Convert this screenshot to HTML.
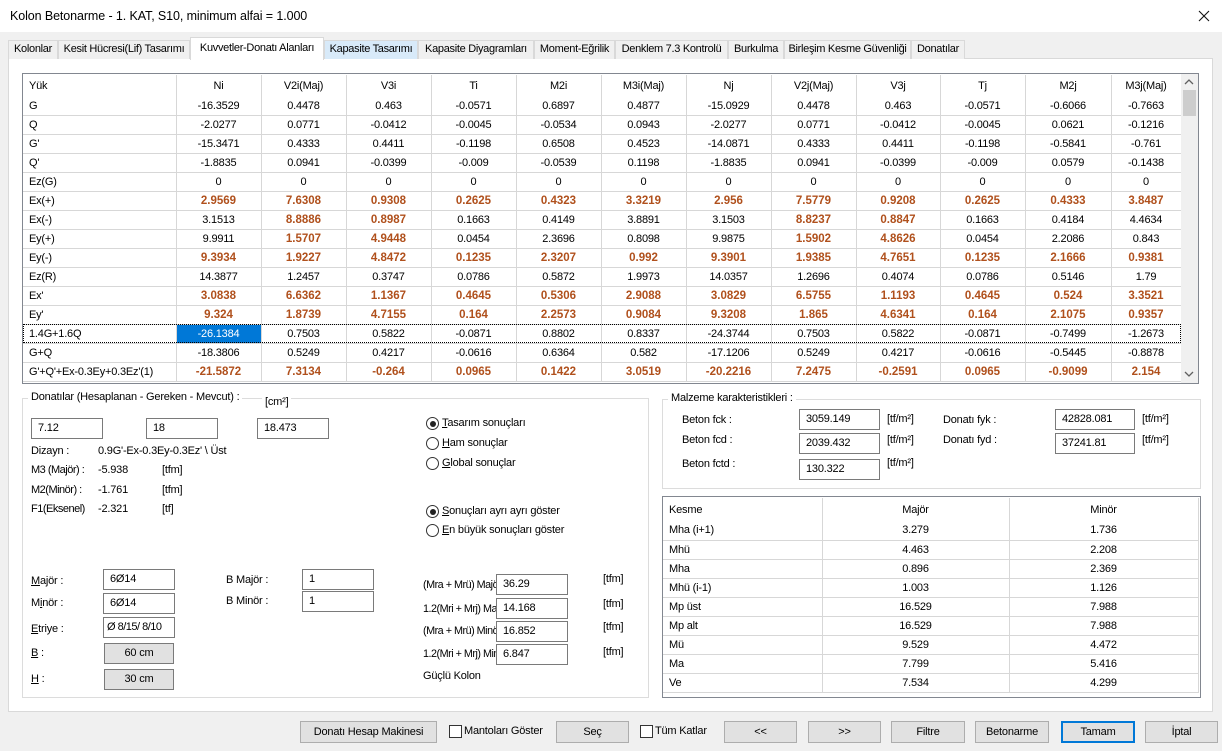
<!DOCTYPE html>
<html><head><meta charset="utf-8">
<style>
*{box-sizing:border-box;margin:0;padding:0}
body{width:1222px;height:751px;background:#f0f0f0;font-family:"Liberation Sans",Arial,sans-serif;font-size:11px;letter-spacing:-0.2px;color:#000;position:relative;overflow:hidden}
.a{position:absolute;white-space:nowrap}
.title{left:0;top:0;width:1222px;height:32px;background:#fff}
.tab{position:absolute;top:40px;height:19px;border:1px solid #d9d9d9;border-bottom:none;background:#f0f0f0;text-align:center;line-height:17px;font-size:11px;white-space:nowrap;overflow:hidden;letter-spacing:-0.3px}
.page{left:8px;top:58px;width:1205px;height:654px;background:#fff;border:1px solid #d9d9d9}
table{border-collapse:collapse;table-layout:fixed}
#g{position:absolute;left:23px;top:75px}
#g td{height:19px;border-right:1px solid #d7d7d7;border-bottom:1px solid #d7d7d7;text-align:center;padding:1px 0 0;font-size:11px;overflow:hidden;white-space:nowrap}
#g tr.h td{height:21px;border-bottom:none;padding:0}
#g td:first-child{text-align:left;padding-left:6px}
#g td.b{font-weight:bold;color:#b0501c;font-size:11.5px;letter-spacing:0}
.box{position:absolute;border:1px solid #7a7a7a;background:#fff;height:21px;line-height:19px;padding-left:6px;font-size:11px}
.gbox{position:absolute;border:1px solid #7a7a7a;background:#e1e1e1;height:21px;line-height:19px;text-align:center}
.grp{position:absolute;border:1px solid #dcdcdc}
.radio{position:absolute;width:13px;height:13px;border:1px solid #333;border-radius:50%;background:#fff}
.radio.on::after{content:"";position:absolute;left:2.5px;top:2.5px;width:6px;height:6px;border-radius:50%;background:#222}
.btn{position:absolute;top:721px;height:22px;border:1px solid #adadad;background:#e1e1e1;text-align:center;line-height:20px;font-size:11px;white-space:nowrap}
.chk{position:absolute;top:725px;width:13px;height:13px;border:1px solid #333;background:#fff}
#k{position:absolute;left:663px;top:498px}
#k td{height:19px;border-right:1px solid #d7d7d7;border-bottom:1px solid #d7d7d7;text-align:center;font-size:11px}
#k td:first-child{text-align:left;padding-left:6px}
u{text-decoration:underline}
.n{letter-spacing:-0.5px}
.m{letter-spacing:-0.5px;font-size:10.8px}
</style></head><body>
<div class="a title"></div>
<div class="a" style="left:10px;top:9px;font-size:12.5px;letter-spacing:-0.1px">Kolon Betonarme - 1. KAT, S10, minimum alfai = 1.000</div>
<svg class="a" style="left:1198px;top:10px" width="12" height="12"><path d="M1 1L11 11M11 1L1 11" stroke="#111" stroke-width="1.1"/></svg>

<div class="a page"></div>
<div class="tab" style="left:8px;width:50px">Kolonlar</div>
<div class="tab" style="left:58px;width:132px">Kesit Hücresi(Lif) Tasarımı</div>
<div class="tab" style="left:324px;width:94px;background:#d8eaf9">Kapasite Tasarımı</div>
<div class="tab" style="left:418px;width:116px">Kapasite Diyagramları</div>
<div class="tab" style="left:534px;width:81px">Moment-Eğrilik</div>
<div class="tab" style="left:615px;width:113px">Denklem 7.3 Kontrolü</div>
<div class="tab" style="left:728px;width:56px">Burkulma</div>
<div class="tab" style="left:784px;width:127px">Birleşim Kesme Güvenliği</div>
<div class="tab" style="left:911px;width:54px">Donatılar</div>
<div class="tab" style="left:190px;top:37px;height:23px;width:134px;background:#fff;line-height:20px">Kuvvetler-Donatı Alanları</div>

<div class="a" style="left:22px;top:73px;width:1177px;height:311px;border:1px solid #828790;background:#fff"></div>
<table id="g">
<colgroup><col style="width:153px"><col style="width:85px"><col style="width:85px"><col style="width:85px"><col style="width:85px"><col style="width:85px"><col style="width:85px"><col style="width:85px"><col style="width:85px"><col style="width:84px"><col style="width:85px"><col style="width:86px"><col style="width:70px"></colgroup>
<tr class="h"><td style="padding-left:6px">Yük</td><td>Ni</td><td>V2i(Maj)</td><td>V3i</td><td>Ti</td><td>M2i</td><td>M3i(Maj)</td><td>Nj</td><td>V2j(Maj)</td><td>V3j</td><td>Tj</td><td>M2j</td><td>M3j(Maj)</td></tr>
<tr><td>G</td><td>-16.3529</td><td>0.4478</td><td>0.463</td><td>-0.0571</td><td>0.6897</td><td>0.4877</td><td>-15.0929</td><td>0.4478</td><td>0.463</td><td>-0.0571</td><td>-0.6066</td><td>-0.7663</td></tr>
<tr><td>Q</td><td>-2.0277</td><td>0.0771</td><td>-0.0412</td><td>-0.0045</td><td>-0.0534</td><td>0.0943</td><td>-2.0277</td><td>0.0771</td><td>-0.0412</td><td>-0.0045</td><td>0.0621</td><td>-0.1216</td></tr>
<tr><td>G'</td><td>-15.3471</td><td>0.4333</td><td>0.4411</td><td>-0.1198</td><td>0.6508</td><td>0.4523</td><td>-14.0871</td><td>0.4333</td><td>0.4411</td><td>-0.1198</td><td>-0.5841</td><td>-0.761</td></tr>
<tr><td>Q'</td><td>-1.8835</td><td>0.0941</td><td>-0.0399</td><td>-0.009</td><td>-0.0539</td><td>0.1198</td><td>-1.8835</td><td>0.0941</td><td>-0.0399</td><td>-0.009</td><td>0.0579</td><td>-0.1438</td></tr>
<tr><td>Ez(G)</td><td>0</td><td>0</td><td>0</td><td>0</td><td>0</td><td>0</td><td>0</td><td>0</td><td>0</td><td>0</td><td>0</td><td>0</td></tr>
<tr><td>Ex(+)</td><td class="b">2.9569</td><td class="b">7.6308</td><td class="b">0.9308</td><td class="b">0.2625</td><td class="b">0.4323</td><td class="b">3.3219</td><td class="b">2.956</td><td class="b">7.5779</td><td class="b">0.9208</td><td class="b">0.2625</td><td class="b">0.4333</td><td class="b">3.8487</td></tr>
<tr><td>Ex(-)</td><td>3.1513</td><td class="b">8.8886</td><td class="b">0.8987</td><td>0.1663</td><td>0.4149</td><td>3.8891</td><td>3.1503</td><td class="b">8.8237</td><td class="b">0.8847</td><td>0.1663</td><td>0.4184</td><td>4.4634</td></tr>
<tr><td>Ey(+)</td><td>9.9911</td><td class="b">1.5707</td><td class="b">4.9448</td><td>0.0454</td><td>2.3696</td><td>0.8098</td><td>9.9875</td><td class="b">1.5902</td><td class="b">4.8626</td><td>0.0454</td><td>2.2086</td><td>0.843</td></tr>
<tr><td>Ey(-)</td><td class="b">9.3934</td><td class="b">1.9227</td><td class="b">4.8472</td><td class="b">0.1235</td><td class="b">2.3207</td><td class="b">0.992</td><td class="b">9.3901</td><td class="b">1.9385</td><td class="b">4.7651</td><td class="b">0.1235</td><td class="b">2.1666</td><td class="b">0.9381</td></tr>
<tr><td>Ez(R)</td><td>14.3877</td><td>1.2457</td><td>0.3747</td><td>0.0786</td><td>0.5872</td><td>1.9973</td><td>14.0357</td><td>1.2696</td><td>0.4074</td><td>0.0786</td><td>0.5146</td><td>1.79</td></tr>
<tr><td>Ex'</td><td class="b">3.0838</td><td class="b">6.6362</td><td class="b">1.1367</td><td class="b">0.4645</td><td class="b">0.5306</td><td class="b">2.9088</td><td class="b">3.0829</td><td class="b">6.5755</td><td class="b">1.1193</td><td class="b">0.4645</td><td class="b">0.524</td><td class="b">3.3521</td></tr>
<tr><td>Ey'</td><td class="b">9.324</td><td class="b">1.8739</td><td class="b">4.7155</td><td class="b">0.164</td><td class="b">2.2573</td><td class="b">0.9084</td><td class="b">9.3208</td><td class="b">1.865</td><td class="b">4.6341</td><td class="b">0.164</td><td class="b">2.1075</td><td class="b">0.9357</td></tr>
<tr style="outline:1px dotted #000;outline-offset:-1px"><td>1.4G+1.6Q</td><td style="background:#0078d7;color:#fff">-26.1384</td><td>0.7503</td><td>0.5822</td><td>-0.0871</td><td>0.8802</td><td>0.8337</td><td>-24.3744</td><td>0.7503</td><td>0.5822</td><td>-0.0871</td><td>-0.7499</td><td>-1.2673</td></tr>
<tr><td>G+Q</td><td>-18.3806</td><td>0.5249</td><td>0.4217</td><td>-0.0616</td><td>0.6364</td><td>0.582</td><td>-17.1206</td><td>0.5249</td><td>0.4217</td><td>-0.0616</td><td>-0.5445</td><td>-0.8878</td></tr>
<tr><td>G'+Q'+Ex-0.3Ey+0.3Ez'(1)</td><td class="b">-21.5872</td><td class="b">7.3134</td><td class="b">-0.264</td><td class="b">0.0965</td><td class="b">0.1422</td><td class="b">3.0519</td><td class="b">-20.2216</td><td class="b">7.2475</td><td class="b">-0.2591</td><td class="b">0.0965</td><td class="b">-0.9099</td><td class="b">2.154</td></tr>
</table>
<div class="a" style="left:1181px;top:74px;width:17px;height:309px;background:#f0f0f0"></div>
<div class="a" style="left:1183px;top:90px;width:13px;height:26px;background:#cdcdcd"></div>
<svg class="a" style="left:1184px;top:78px" width="10" height="8"><path d="M1 6L5 2L9 6" stroke="#606060" fill="none" stroke-width="1.3"/></svg>
<svg class="a" style="left:1184px;top:370px" width="10" height="8"><path d="M1 2L5 6L9 2" stroke="#606060" fill="none" stroke-width="1.3"/></svg>

<!-- left group -->
<div class="grp" style="left:22px;top:398px;width:627px;height:300px"></div>
<div class="a" style="left:28px;top:391px;background:#fff;padding:0 3px">Donatılar (Hesaplanan - Gereken - Mevcut) :</div>
<div class="a" style="left:262px;top:396px;background:#fff;padding:0 3px">[cm²]</div>
<div class="box" style="left:31px;top:418px;width:72px">7.12</div>
<div class="box" style="left:146px;top:418px;width:72px">18</div>
<div class="box" style="left:257px;top:418px;width:72px">18.473</div>
<div class="a" style="left:31px;top:445px">Dizayn :</div><div class="a" style="left:98px;top:445px">0.9G'-Ex-0.3Ey-0.3Ez' \ Üst</div>
<div class="a n" style="left:31px;top:464px">M3 (Majör) :</div><div class="a" style="left:98px;top:464px">-5.938</div><div class="a" style="left:162px;top:464px">[tfm]</div>
<div class="a n" style="left:31px;top:484px">M2(Minör) :</div><div class="a" style="left:98px;top:484px">-1.761</div><div class="a" style="left:162px;top:484px">[tfm]</div>
<div class="a n" style="left:31px;top:503px">F1(Eksenel)</div><div class="a" style="left:98px;top:503px">-2.321</div><div class="a" style="left:162px;top:503px">[tf]</div>

<div class="radio on" style="left:426px;top:417px"></div><div class="a" style="left:442px;top:417px"><u>T</u>asarım sonuçları</div>
<div class="radio" style="left:426px;top:437px"></div><div class="a" style="left:442px;top:437px"><u>H</u>am sonuçlar</div>
<div class="radio" style="left:426px;top:457px"></div><div class="a" style="left:442px;top:457px"><u>G</u>lobal sonuçlar</div>
<div class="radio on" style="left:426px;top:505px"></div><div class="a" style="left:442px;top:505px"><u>S</u>onuçları ayrı ayrı göster</div>
<div class="radio" style="left:426px;top:524px"></div><div class="a" style="left:442px;top:524px"><u>E</u>n büyük sonuçları göster</div>

<div class="a" style="left:31px;top:575px"><u>M</u>ajör :</div><div class="box" style="left:103px;top:569px;width:72px">6Ø14</div>
<div class="a" style="left:31px;top:597px">M<u>i</u>nör :</div><div class="box" style="left:103px;top:593px;width:72px">6Ø14</div>
<div class="a" style="left:31px;top:623px"><u>E</u>triye :</div><div class="box n" style="left:103px;top:617px;width:72px;padding-left:3px">Ø 8/15/ 8/10</div>
<div class="a" style="left:31px;top:647px"><u>B</u> :</div><div class="gbox" style="left:104px;top:643px;width:70px">60 cm</div>
<div class="a" style="left:31px;top:673px"><u>H</u> :</div><div class="gbox" style="left:104px;top:669px;width:70px">30 cm</div>
<div class="a" style="left:226px;top:574px">B Majör :</div><div class="box" style="left:302px;top:569px;width:72px">1</div>
<div class="a" style="left:226px;top:595px">B Minör :</div><div class="box" style="left:302px;top:591px;width:72px">1</div>

<div class="a m" style="left:423px;top:579px">(Mra + Mrü) Majör :</div><div class="box" style="left:496px;top:574px;width:72px">36.29</div><div class="a" style="left:603px;top:573px">[tfm]</div>
<div class="a m" style="left:423px;top:603px">1.2(Mri + Mrj) Majör</div><div class="box" style="left:496px;top:598px;width:72px">14.168</div><div class="a" style="left:603px;top:598px">[tfm]</div>
<div class="a m" style="left:423px;top:625px">(Mra + Mrü) Minör :</div><div class="box" style="left:496px;top:621px;width:72px">16.852</div><div class="a" style="left:603px;top:621px">[tfm]</div>
<div class="a m" style="left:423px;top:648px">1.2(Mri + Mrj) Minör</div><div class="box" style="left:496px;top:644px;width:72px">6.847</div><div class="a" style="left:603px;top:646px">[tfm]</div>
<div class="a" style="left:423px;top:670px">Güçlü Kolon</div>

<!-- right group -->
<div class="grp" style="left:662px;top:399px;width:539px;height:90px"></div>
<div class="a" style="left:668px;top:392px;background:#fff;padding:0 3px">Malzeme karakteristikleri :</div>
<div class="a" style="left:682px;top:414px">Beton fck :</div><div class="box" style="left:799px;top:409px;width:81px">3059.149</div><div class="a" style="left:887px;top:413px">[tf/m²]</div>
<div class="a" style="left:682px;top:434px">Beton fcd :</div><div class="box" style="left:799px;top:433px;width:81px">2039.432</div><div class="a" style="left:887px;top:434px">[tf/m²]</div>
<div class="a" style="left:682px;top:458px">Beton fctd :</div><div class="box" style="left:799px;top:459px;width:81px">130.322</div><div class="a" style="left:887px;top:457px">[tf/m²]</div>
<div class="a" style="left:943px;top:414px">Donatı fyk :</div><div class="box" style="left:1055px;top:409px;width:80px">42828.081</div><div class="a" style="left:1142px;top:413px">[tf/m²]</div>
<div class="a" style="left:943px;top:434px">Donatı fyd :</div><div class="box" style="left:1055px;top:433px;width:80px">37241.81</div><div class="a" style="left:1142px;top:434px">[tf/m²]</div>

<div class="a" style="left:662px;top:496px;width:539px;height:202px;border:1px solid #828790;background:#fff"></div>
<table id="k">
<colgroup><col style="width:159px"><col style="width:187px"><col style="width:189px"></colgroup>
<tr><td style="height:23px;border-bottom:none">Kesme</td><td style="border-bottom:none">Majör</td><td style="border-bottom:none">Minör</td></tr>
<tr><td>Mha (i+1)</td><td>3.279</td><td>1.736</td></tr>
<tr><td>Mhü</td><td>4.463</td><td>2.208</td></tr>
<tr><td>Mha</td><td>0.896</td><td>2.369</td></tr>
<tr><td>Mhü (i-1)</td><td>1.003</td><td>1.126</td></tr>
<tr><td>Mp üst</td><td>16.529</td><td>7.988</td></tr>
<tr><td>Mp alt</td><td>16.529</td><td>7.988</td></tr>
<tr><td>Mü</td><td>9.529</td><td>4.472</td></tr>
<tr><td>Ma</td><td>7.799</td><td>5.416</td></tr>
<tr><td>Ve</td><td>7.534</td><td>4.299</td></tr>
</table>

<!-- bottom -->
<div class="btn" style="left:300px;width:137px">Donatı Hesap Makinesi</div>
<div class="chk" style="left:449px"></div><div class="a" style="left:464px;top:725px">Mantoları Göster</div>
<div class="btn" style="left:556px;width:73px">Seç</div>
<div class="chk" style="left:640px"></div><div class="a" style="left:655px;top:725px">Tüm Katlar</div>
<div class="btn" style="left:724px;width:73px">&lt;&lt;</div>
<div class="btn" style="left:808px;width:73px">&gt;&gt;</div>
<div class="btn" style="left:891px;width:74px">Filtre</div>
<div class="btn" style="left:975px;width:74px">Betonarme</div>
<div class="btn" style="left:1061px;width:74px;border:2px solid #0078d7;line-height:18px">Tamam</div>
<div class="btn" style="left:1145px;width:73px">İptal</div>
</body></html>
